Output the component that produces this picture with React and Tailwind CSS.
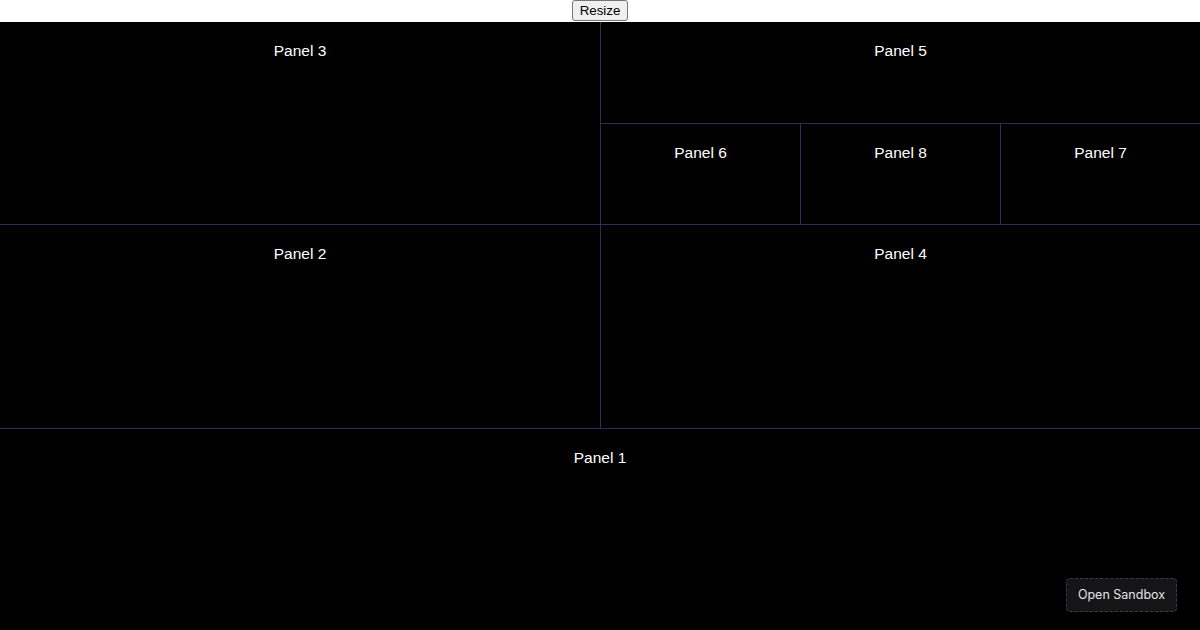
export default function App() {
  const line = 'border-[#312d5b]';

  const Panel = ({ label, className = '' }) => (
    <div className={`flex-1 basis-0 min-w-0 min-h-0 bg-black ${className}`}>
      <div className="flex justify-center pt-[20px]">
        <span className="text-white text-[15.5px] leading-[18px]">{label}</span>
      </div>
    </div>
  );

  return (
    <div className="relative w-[1200px] h-[630px] flex flex-col bg-black overflow-hidden font-['Liberation_Sans',Arial,sans-serif]">
      {/* top bar */}
      <div className="h-[22px] bg-white flex justify-center items-start">
        <button className="h-[21px] px-[7px] bg-[#efefef] border border-[#767676] rounded-[3px] text-[13.33px] leading-[15px] text-black">
          Resize
        </button>
      </div>

      {/* panels */}
      <div className="flex-1 flex flex-col">
        <div className="h-[202px] flex-none flex">
          <Panel label="Panel 3" className="w-[600px] flex-none basis-auto" />
          <div className={`flex-1 flex flex-col border-l ${line}`}>
            <Panel label="Panel 5" />
            <div className={`flex-1 basis-0 min-h-0 flex border-t ${line}`}>
              <Panel label="Panel 6" />
              <Panel label="Panel 8" className={`border-l ${line}`} />
              <Panel label="Panel 7" className={`border-l ${line}`} />
            </div>
          </div>
        </div>
        <div className={`h-[204px] flex-none flex border-t ${line}`}>
          <Panel label="Panel 2" className="w-[600px] flex-none basis-auto" />
          <Panel label="Panel 4" className={`border-l ${line}`} />
        </div>
        <div className={`flex-1 basis-0 min-h-0 flex border-t ${line}`}>
          <Panel label="Panel 1" />
        </div>
      </div>

      {/* sandbox button */}
      <button className="absolute right-[23px] bottom-[18px] w-[111px] h-[34px] rounded-[4px] bg-[#151517] border border-dashed border-[#3c3b4a] text-[#e4e4e7] text-[12.5px] font-['Inter',sans-serif]">
        Open Sandbox
      </button>
    </div>
  );
}
